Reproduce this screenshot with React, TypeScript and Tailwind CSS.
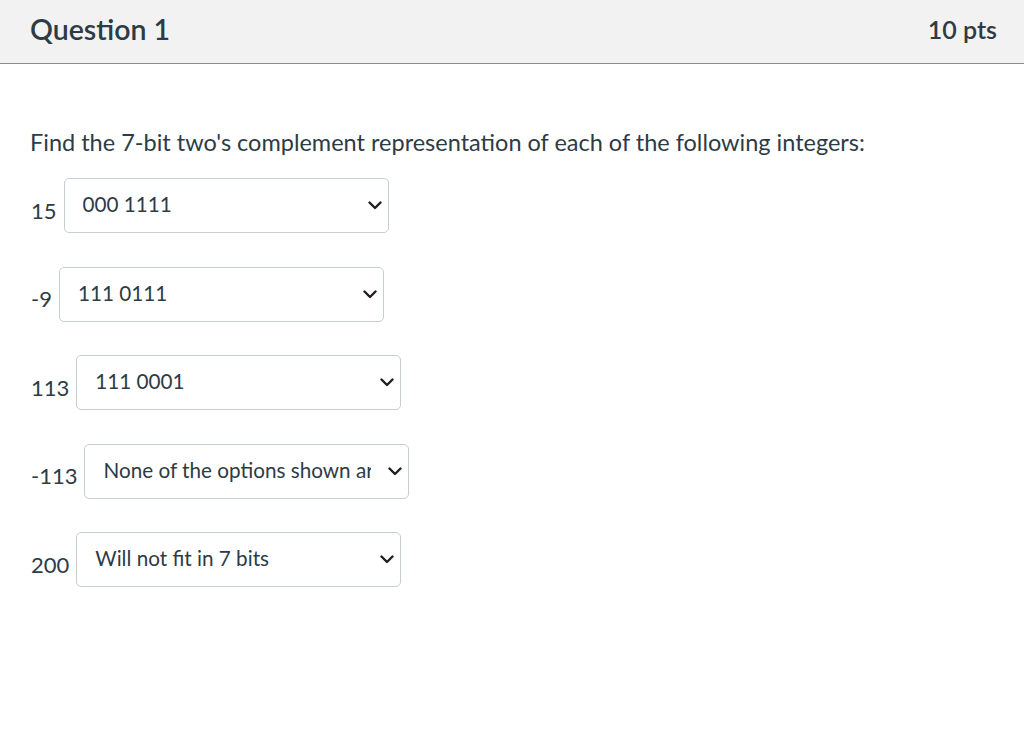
import React from "react";

const rows = [
  { label: "15", value: "000 1111" },
  { label: "-9", value: "111 0111" },
  { label: "113", value: "111 0001" },
  { label: "-113", value: "None of the options shown are correct" },
  { label: "200", value: "Will not fit in 7 bits" },
];

function Chevron() {
  return (
    <svg width="14" height="9" viewBox="0 0 14 9" className="shrink-0">
      <polyline points="1.5,1.5 7,7 12.5,1.5" fill="none" stroke="#1f1f1f" strokeWidth="2.4" strokeLinecap="round" strokeLinejoin="round" />
    </svg>
  );
}

export default function App() {
  return (
    <div className="w-[1024px] h-[738px] bg-white text-[#2d3b45]" style={{ fontFamily: "Lato, 'Noto Sans', sans-serif" }}>
      <div className="h-[64px] bg-[#f2f2f2] border-b border-[#8a8a8a] flex items-center justify-between pl-[30px] pr-[27px]">
        <div className="text-[28.5px] font-semibold leading-[36px] mt-[-6px]">Question 1</div>
        <div className="text-[25px] font-semibold leading-[36px] mt-[-6px]">10 pts</div>
      </div>
      <div className="pl-[30px] pt-[61px]">
        <div className="text-[23.5px] leading-[34px]">Find the 7-bit two's complement representation of each of the following integers:</div>
        <div className="mt-[19px] flex flex-col gap-[33.5px]">
          {rows.map((r) => (
            <div key={r.label} className="flex items-center">
              <div className="text-[22px] leading-[30px] mt-[10px] pl-[1px]">{r.label}</div>
              <div className="ml-[7px] w-[325px] h-[55px] border border-[#c7cdd1] rounded-[5px] flex items-center pl-[18px] pr-[6px]">
                <div className="flex-1 overflow-hidden whitespace-nowrap text-[20.7px] leading-[30px] mt-[-3px] text-[#2d3b45] mr-[17px]">{r.value}</div>
                <Chevron />
              </div>
            </div>
          ))}
        </div>
      </div>
    </div>
  );
}
